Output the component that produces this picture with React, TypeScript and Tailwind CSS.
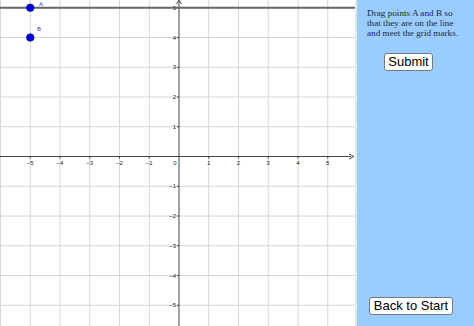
import React from "react";

const U = 29.75;
const OX = 179;
const OY = 156.5;

function Graph() {
  const xs = [-6, -5, -4, -3, -2, -1, 1, 2, 3, 4, 5];
  const ys = [5, 4, 3, 2, 1, -1, -2, -3, -4, -5];
  return (
    <svg width="355" height="326" viewBox="0 0 355 326" className="block">
      <rect x="0" y="0" width="355" height="326" fill="#ffffff" />
      {xs.map((v) => (
        <line key={"gx" + v} x1={OX + v * U} y1={0} x2={OX + v * U} y2={326} stroke="#d6d6d6" strokeWidth="1" />
      ))}
      {ys.map((v) => (
        <line key={"gy" + v} x1={0} y1={OY - v * U} x2={355} y2={OY - v * U} stroke="#d6d6d6" strokeWidth="1" />
      ))}
      <line x1={0} y1={OY} x2={351} y2={OY} stroke="#444" strokeWidth="1" />
      <path d={`M349,${OY - 2.5} L354,${OY} L349,${OY + 2.5}`} fill="none" stroke="#444" strokeWidth="1" />
      <line x1={OX} y1={1} x2={OX} y2={326} stroke="#444" strokeWidth="1" />
      <path d={`M${OX - 2.5},4 L${OX},0 L${OX + 2.5},4`} fill="none" stroke="#444" strokeWidth="1" />
      {xs.filter((v) => v >= -5).map((v) => (
        <g key={"tx" + v}>
          <line x1={OX + v * U} y1={OY} x2={OX + v * U} y2={OY + 2} stroke="#444" />
          <text x={OX + v * U} y={OY + 8.5} fontSize="6" textAnchor="middle" fill="#222" fontFamily="'Liberation Sans', sans-serif">
            {v < 0 ? "\u2212" + -v : String(v)}
          </text>
        </g>
      ))}
      <text x={OX - 4} y={OY + 8.5} fontSize="6" textAnchor="middle" fill="#222" fontFamily="'Liberation Sans', sans-serif">0</text>
      {ys.map((v) => (
        <g key={"ty" + v}>
          <line x1={OX - 2} y1={OY - v * U} x2={OX} y2={OY - v * U} stroke="#444" />
          <text x={OX - 3} y={OY - v * U + 2} fontSize="6" textAnchor="end" fill="#222" fontFamily="'Liberation Sans', sans-serif">
            {v < 0 ? "\u2212" + -v : String(v)}
          </text>
        </g>
      ))}
      <line x1={0} y1={OY - 5 * U} x2={355} y2={OY - 5 * U} stroke="#666" strokeWidth="2" />
      <circle cx={OX - 5 * U} cy={OY - 5 * U} r="3.8" fill="#0000e6" stroke="#000080" strokeWidth="0.6" />
      <circle cx={OX - 5 * U} cy={OY - 4 * U} r="3.8" fill="#0000e6" stroke="#000080" strokeWidth="0.6" />
      <text x={39} y={6} fontSize="6" fill="#3333cc" fontFamily="'Liberation Sans', sans-serif">A</text>
      <text x={37} y={31} fontSize="6" fill="#3333cc" fontFamily="'Liberation Sans', sans-serif">B</text>
    </svg>
  );
}

export default function App() {
  return (
    <div className="flex w-[474px] h-[326px] overflow-hidden bg-white">
      <div className="w-[355px] h-[326px] shrink-0">
        <Graph />
      </div>
      <div className="w-[2px] h-[326px] bg-[#e6e6e6] shrink-0" />
      <div className="flex-1 h-[326px] bg-[#99ccff] flex flex-col">
        <div
          className="pl-[10px] pt-[8px] text-[9.2px] leading-[10px] text-[#1f2a3a]"
          style={{ fontFamily: "'Liberation Serif', 'DejaVu Serif', serif" }}
        >
          <div>Drag points A and B so</div>
          <div>that they are on the line</div>
          <div>and meet the grid marks.</div>
        </div>
        <div className="pl-[27px] pt-[15px]">
          <button
            className="w-[49px] h-[18px] bg-white border border-[#777] rounded-[3px] text-[13px] leading-[16px] text-black flex items-center justify-center"
            style={{ fontFamily: "'Liberation Sans', Arial, sans-serif" }}
          >
            Submit
          </button>
        </div>
        <div className="flex-1" />
        <div className="pl-[12px] pb-[11px]">
          <button
            className="w-[84px] h-[18px] bg-white border border-[#777] rounded-[3px] text-[13px] leading-[16px] text-black flex items-center justify-center"
            style={{ fontFamily: "'Liberation Sans', Arial, sans-serif" }}
          >
            Back to Start
          </button>
        </div>
      </div>
    </div>
  );
}
